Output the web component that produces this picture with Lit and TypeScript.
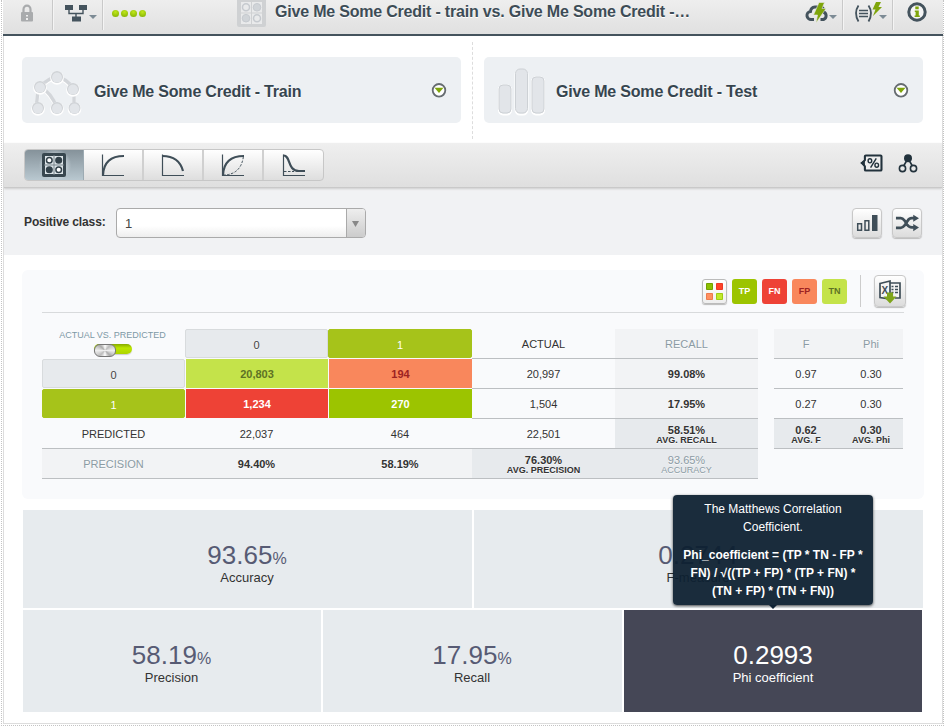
import { LitElement, html, css, svg } from "lit";
import { customElement } from "lit/decorators.js";

const lock = html`<svg width="14" height="18" viewBox="0 0 14 18"><path d="M3.5 9V5.5a3.5 3.8 0 0 1 7 0V9" fill="none" stroke="#a9abad" stroke-width="2.2"/><rect x="1" y="8" width="12" height="9.5" rx="1" fill="#a9abad"/><path d="M7 11v1.5M7 14v2" stroke="#eee" stroke-width="2"/></svg>`;
const flow = html`<svg width="24" height="18" viewBox="0 0 24 18"><path d="M5 4v5.5h14V4M12 9.500v4" fill="none" stroke="#44535d" stroke-width="1.400"/><path d="M1 1h8v5H1zM15 1h8v5h-8zM8 12.500h9v5H8z" fill="#44535d"/></svg>`;
const caret = html`<svg width="8" height="4" viewBox="0 0 8 4"><path d="M0 0h8L4 4z" fill="#7d8b95"/></svg>`;
const matrixPale = html`<svg width="29" height="28" viewBox="0 0 29 28"><rect x="0" y="-3" width="29" height="30" rx="2" fill="#cfd1d3"/><rect x="4" y="2" width="21" height="22" fill="#e9eaeb"/><path d="M14.500 2v22M4 13h21" stroke="#cfd1d3"/><g stroke="#c6cacf"><circle cx="9" cy="7.300" r="3.500" fill="#e9eaeb" stroke-width="1.500"/><circle cx="20" cy="7.300" r="3.800" fill="#d0d4d8"/><circle cx="9" cy="18.200" r="3.800" fill="#d0d4d8"/><circle cx="20" cy="18.200" r="3.500" fill="#e9eaeb" stroke-width="1.500"/></g></svg>`;
const cloud = html`<svg width="24" height="22" viewBox="0 0 24 22"><path d="M9 17.500H6.500a4 4 0 0 1-1-8A5 5 0 0 1 10 5h6q3 1 2.500 5a4 4 0 0 1 0 7.500h-3" fill="none" stroke="#44535d" stroke-width="3"/><path d="M14 .5h5.500l-2.500 6H21L11 21l1.500-8H8.500z" fill="#7fa50b" stroke="#e9e9e9" stroke-width=".6"/></svg>`;
const formula = html`<svg width="30" height="22" viewBox="0 0 30 22"><path d="M4.500 3.500q-5 7.500 0 16M14.500 3.500q5 7.500 0 16" fill="none" stroke="#44535d" stroke-width="1.800"/><path d="M5 8.500h9M5 11.500h9M5 14.500h9" stroke="#44535d" stroke-width="1.600"/><path d="M22 0h5l-2.500 5H28l-9 9 2.500-6.500H18.500z" fill="#7fa50b"/></svg>`;
const info = html`<svg width="20" height="20" viewBox="0 0 20 20"><circle cx="10" cy="10" r="8.200" fill="#f4f4f4" stroke="#44535d" stroke-width="3"/><path d="M8.300 4.500h3.400v2.800H8.300zM7.800 8.500h4v5h1V15H7.600v-1.500h1v-3.500h-.8z" fill="#7fa50b"/></svg>`;
const branches = "M26 7Q17 8 9 17M26 7Q35 8 43 19v19M9 17Q5 26 6 38M9 17Q20 22 26 38";
const tree = html`<svg width="52" height="50" viewBox="0 0 52 50"><path d=${branches} transform="translate(0 1)" fill="none" stroke="#fff" stroke-width="4"/><path d=${branches} fill="none" stroke="#d3d6da" stroke-width="3.500"/>${[[26, 7], [9, 17], [42, 19], [7, 38], [26, 38], [43.5, 38]].map(([x, y]) => svg`<circle cx=${x} cy=${y + 1} r="6.800" fill="#fff"/><circle cx=${x} cy=${y} r="6" fill="#cfd2d6"/><circle cx=${x} cy=${y + 0.6} r="5" fill="#e2e5e9"/>`)}</svg>`;
const bars = html`<svg width="48" height="48" viewBox="0 0 48 48"><g fill="#e3e6ea" stroke="#fff" stroke-width="2"><rect x="1" y="17.500" width="12" height="29" rx="4"/><rect x="17.500" y="2" width="12" height="44.500" rx="4.500"/><rect x="34" y="9.500" width="12" height="37" rx="4"/></g><g fill="#e2e5e9" stroke="#cdd1d5"><rect x="1" y="17" width="12" height="28" rx="4"/><rect x="17.500" y="1" width="12" height="44" rx="4.500"/><rect x="34" y="9" width="12" height="36" rx="4"/></g></svg>`;
const drop = html`<svg width="16" height="16" viewBox="0 0 16 16"><circle cx="8" cy="8.300" r="6.300" fill="#fff" stroke="#666c70" stroke-width="1.800"/><path d="M3.500 5.800h9L8 11z" fill="#7fa50b"/></svg>`;
const grid = html`<svg width="26" height="26" viewBox="0 0 26 26"><rect x="1" y="1" width="24" height="24" rx="2" fill="#38474f"/><path d="M4 4h18v18H4z" fill="#dce4e8"/><path d="M13 3v20M3 13h20" stroke="#7b878d"/><g stroke="#33424a" stroke-width="1.500" fill="#fff"><circle cx="8.300" cy="8.300" r="2.800"/><circle cx="17.700" cy="8.300" r="2.800" fill="#33424a"/><circle cx="8.300" cy="17.700" r="2.800" fill="#33424a"/><circle cx="17.700" cy="17.700" r="2.800"/></g></svg>`;
const curve = (main: string, extra = "") => html`<svg width="24" height="24" viewBox="0 0 24 24"><path d="M1.500 1.500v21H23" fill="none" stroke="#3f4e58" stroke-width="1.200"/><path d=${extra} fill="none" stroke="#3f4e58" stroke-dasharray="2.500 1.500"/><path d=${main} fill="none" stroke="#3f4e58" stroke-width="2.200"/></svg>`;
const percent = html`<svg width="22" height="18" viewBox="1 0 23 19"><path d="M5 2.500q0-1 1-1h15.500q1 0 1 1v14q0 1-1 1H6q-1 0-1-1v-3.500L2 9.500 5 6.500z" fill="#eee" stroke="#22323c" stroke-width="2.200"/><path d="M0 9.500 5 6v7z" fill="#22323c"/><path d="M17 4.500l-6 10" stroke="#22323c" stroke-width="1.500"/><ellipse cx="10.300" cy="7.200" rx="1.900" ry="2.200" fill="none" stroke="#22323c" stroke-width="1.500"/><ellipse cx="17.500" cy="11.800" rx="1.900" ry="2.200" fill="none" stroke="#22323c" stroke-width="1.500"/></svg>`;
const nodes = html`<svg width="20" height="20" viewBox="0 0 20 20"><path d="M10 4.500 5 13M10 4.500 15 13" stroke="#22323c" stroke-width="1.600"/><circle cx="10" cy="4.300" r="4" fill="#22323c"/><g fill="#e8e8e8" stroke="#22323c" stroke-width="1.600"><circle cx="4.500" cy="14.500" r="3.100"/><circle cx="15.500" cy="14.500" r="3.100"/></g></svg>`;
const chart = html`<svg width="22" height="18" viewBox="0 0 22 18"><path d="M1.700 9.700h3.800v6.600H1.700zM9 6.700h3.800v9.600H9z" fill="none" stroke="#3f4e58" stroke-width="1.500"/><path d="M16 1h5.500v16H16z" fill="#3f4e58"/></svg>`;
const shuffle = html`<svg width="24" height="18" viewBox="-1 0 25 18"><path d="M0 4h5q2 0 4 2.500l2.500 4q2 3 5 3h3M0 14h5q2 0 4-2.500L12 7q1.500-3 4.500-3h3" fill="none" stroke="#3f4e58" stroke-width="2.800"/><path d="M18 .3 24 4l-6 3.800zM18 10l6 3.700-6 3.800z" fill="#3f4e58"/></svg>`;
const quad = html`<svg width="18" height="18" viewBox="0 0 18 18"><g stroke-width="1"><path d="M1.500 1.500h6v6h-6z" fill="#8cc100" stroke="#73a000"/><path d="M11.500 1.500h6v6h-6z" fill="#ff4228" stroke="#ea3a25"/><path d="M1.500 11.500h6v6h-6z" fill="#ff8f60" stroke="#ed7a4b"/><path d="M11.500 11.500h6v6h-6z" fill="#c0e92a" stroke="#9fcb13"/></g></svg>`;
const sheet = html`<svg width="22" height="24" viewBox="0 0 22 24"><path d="M1 3.500 11 1v18L1 17.500zM11 3h10v15h-5" fill="#f4f4f4" stroke="#3f4e58" stroke-width="1.700"/><text class="sheet-x" x="2.500" y="14">X</text><path d="M12.500 6.500h2M16 6.500h3M12.500 9.500h2M16 9.500h3M12.500 12.500h2M16 12.500h3" stroke="#3f4e58" stroke-width="1.500"/><path d="M8 12.500h6v4h3.500L11 23.500l-6.500-7H8z" fill="#7fa51b"/></svg>`;

type Cell = [value: string, look: string, note?: string];

const matrix: Cell[] = [
  ["0", "head"], ["1", "head pos"], ["ACTUAL", "line"], ["RECALL", "line soft muted"],
  ["0", "head"], ["20,803", "tn"], ["194", "fp"], ["20,997", "line"], ["99.08%", "line soft bold"],
  ["1", "head pos"], ["1,234", "fn"], ["270", "tp"], ["1,504", "line"], ["17.95%", "line soft bold"],
  ["PREDICTED", "line"], ["22,037", "line"], ["464", "line"], ["22,501", "line"], ["58.51%", "line avg bold", "AVG. RECALL"],
  ["PRECISION", "line soft muted"], ["94.40%", "line soft bold"], ["58.19%", "line soft bold"], ["76.30%", "line avg bold", "AVG. PRECISION"], ["93.65%", "line avg muted", "ACCURACY"],
];
const scores: Cell[] = [
  ["F", "line soft muted"], ["Phi", "line soft muted"],
  ["0.97", "line"], ["0.30", "line"],
  ["0.27", "line"], ["0.30", "line"],
  ["0.62", "line avg bold", "AVG. F"], ["0.30", "line avg bold", "AVG. Phi"],
];
const cell = ([value, look, note]: Cell) =>
  html`<div class="cell ${look} ${note ? "noted" : ""}"><span>${value}</span>${note ? html`<small>${note}</small>` : ""}</div>`;
const tile = (value: string, unit: string, label: string, look = "") =>
  html`<div class="tile ${look}"><div class="value">${value}<span class="unit">${unit}</span></div><div class="label">${label}</div></div>`;

@customElement("app-root")
export class AppRoot extends LitElement {
  static styles = css`
    :host { display: block; width: 944px; height: 726px; box-sizing: border-box; overflow: hidden; background: #fff; font-family: "Liberation Sans", Arial, sans-serif; color: #333; padding-left: 1px; }
    * { box-sizing: border-box; }
    svg { display: block; flex: none; overflow: visible; }
    .outer { height: 100%; border: 1px dotted #c4c4c4; border-top: 0; padding: 0 0 1px 1px; }
    .frame { height: 100%; border: 1px solid #ddd; border-top: 0; display: flex; flex-direction: column; }
    header { height: 36px; margin: 0 -1px; flex: none; display: flex; background: linear-gradient(#eee, #e0e0e0); border-bottom: 2px solid #44535d; }
    .slot { height: 30px; width: 50px; display: flex; border-right: 1px solid #c9c9c9; box-shadow: 1px 0 #f4f4f4; }
    .slot.last { border: 0; box-shadow: none; }
    .lock svg { margin: 4px 0 0 17px; }
    .flow svg:first-child { margin: 4px 0 0 11px; }
    .flow svg + svg { margin: 15px 0 0 1px; }
    .dots { display: flex; gap: 2px; margin: 10px 0 0 9px; width: 125px; }
    .dots i { width: 7px; height: 7px; border-radius: 50%; background: radial-gradient(circle at 50% 30%, #c0e81b, #7caa00); }
    .title { display: flex; flex: 1; font: bold 16px/23px "Liberation Sans", Arial, sans-serif; letter-spacing: -.2px; color: #3d4c56; text-shadow: 0 1px #fff; }
    .title span { margin-left: 9px; white-space: nowrap; }
    .cloud svg:first-child { margin: 2px 0 0 12px; }
    .cloud svg + svg { margin: 15px 0 0 0; }
    .formula svg:first-child { margin: 2px 0 0 11px; }
    .formula svg + svg { margin: 15px 0 0 -5px; }
    .info svg { margin: 2px 0 0 14px; }
    .sources { height: 107px; flex: none; display: flex; padding-left: 18px; }
    .source { width: 439px; flex: none; height: 66px; margin-top: 21px; border-radius: 5px; background: #edf0f3; display: flex; align-items: center; font-weight: bold; font-size: 16px; letter-spacing: -.19px; color: #36454f; text-shadow: 0 1px #fff; }
    .source svg:first-child { margin: 9px 0 0 9px; width: 52px; }
    .source.test svg:first-child { margin: 4px 0 0 14px; width: 48px; }
    .source span { flex: 1; margin: 4px 0 0 11px; }
    .source.test span { margin-left: 10px; }
    .source svg:last-child { margin: 0 14px 0 0; }
    .split { width: 23px; margin: 6px 0 4px; display: flex; justify-content: center; }
    .split::before { content: ""; border-left: 1px dashed #ddd; }
    .toolbar { height: 45px; flex: none; padding: 6px 24px 0 20px; background: linear-gradient(#efefef, #dfdfdf); border-bottom: 1px solid #c9c9c9; box-shadow: 0 1px 2px #ccc; display: flex; position: relative; }
    .tabs { height: 32px; display: flex; border: 1px solid #c7c7c7; border-radius: 4px; overflow: hidden; background: linear-gradient(#fff, #dedede); }
    .tab { width: 60px; border-right: 2px solid #d0d0d0; display: flex; align-items: center; justify-content: center; }
    .tab:first-child { width: 59px; }
    .tab:last-child { border: 0; width: 59px; }
    .tab.on { background: radial-gradient(circle at 52% 50%, #dce7ed 15%, transparent 48%), linear-gradient(#85929a, #b9c8d0); border-right: 1px solid #9dabb3; }
    .tools { margin: 5px 0 0 auto; display: flex; gap: 16px; }
    .tools svg:first-child { margin: 0 -1px 0 0; }
    .filter { height: 67px; flex: none; background: #f1f2f4; display: flex; padding: 20px 20px 0 20px; font-size: 12px; }
    .filter b { line-height: 28px; width: 92px; letter-spacing: -.12px; }
    .select { width: 250px; height: 30px; border: 1px solid #aaa; border-radius: 4px; background: linear-gradient(#fff 60%, #eee); display: flex; color: #444; font-size: 13px; line-height: 29px; padding-left: 8px; overflow: hidden; position: relative; }
    .select::after { content: ""; margin-left: auto; width: 18px; background: linear-gradient(#eee, #ccc); border-left: 1px solid #aaa; }
    .select svg { position: absolute; right: 6px; top: 12px; }
    .btn { width: 30px; height: 30px; border-radius: 4px; border: 1px solid #c8c8c8; background: linear-gradient(#fff, #dcdcdc); box-shadow: 0 1px 1px #bbb; display: flex; align-items: center; justify-content: center; }
    .filter .btn { margin-left: 10px; }
    .filter .btn.first { margin-left: auto; }
    .panel { height: 229px; flex: none; margin: 15px 18px 0 18px; border-radius: 6px; background: #f9fafc; padding: 5px 20px 0 20px; }
    .legend { height: 38px; border-bottom: 1px solid #d8dadc; display: flex; justify-content: flex-end; align-items: flex-start; gap: 5px; }
    .key { width: 25px; height: 25px; margin-top: 4px; border-radius: 3px; font: bold 9px/25px "Liberation Sans", Arial, sans-serif; text-align: center; }
    .key.all { border: 1px solid #bbb; background: linear-gradient(#fff, #eee); box-shadow: 0 1px 1px #bbb; padding: 2px; }
    .legend .rule { width: 1px; height: 32px; background: #ccc; margin: 0 8px; }
    .legend .btn { width: 32px; height: 32px; margin-right: -2px; padding-top: 1px; }
    .sheet-x { font: bold 10px "Liberation Sans", Arial, sans-serif; fill: #3f4e58; }
    .tables { display: flex; margin-top: 16px; gap: 16px; }
    .matrix { display: grid; width: 716px; flex: none; grid-template-columns: 143px 143px 144px 143px 143px; grid-auto-rows: 30px; }
    .scores { display: grid; width: 129px; flex: none; grid-template-columns: 64px 65px; grid-auto-rows: 30px; align-content: start; }
    .scores .cell:nth-child(even) { padding-left: 1px; }
    .cell { display: flex; flex-direction: column; align-items: center; justify-content: center; font-size: 11px; line-height: 12px; border-bottom: 1px solid transparent; text-shadow: 0 1px rgba(255,255,255,.7); }
    .cell.noted { line-height: 11px; padding-top: 2px; }
    .cell small { font-size: 9px; line-height: 8px; }
    .line { border-color: #bcbfc2; }
    .soft { background: #f2f3f5; }
    .avg { background: #e7eaed; }
    .muted { color: #8b9ba4; }
    .bold { font-weight: bold; }
    .head { height: 29px; border: 1px solid #d8dbdd; border-radius: 2px; background: #e7eaed; padding-top: 3px; color: #444; }
    .head.pos { background: #a6c31a; border-color: #a6c31a; color: #fff; text-shadow: none; }
    .cell.tn, .cell.fp, .cell.fn, .cell.tp { height: 29px; margin-left: 1px; font-weight: bold; padding-top: 1px; border: 0; text-shadow: none; }
    .tn { background: #c4e34a; color: #5e7225; }
    .fp { background: #f9875c; color: #9e2222; }
    .fn { background: #ee4236; color: #fff; }
    .tp { background: #9cc400; color: #fff; }
    .switch { display: flex; flex-direction: column; align-items: center; font-size: 9px; line-height: 10px; color: #7e99a6; padding: 1px 2px 0 0; white-space: nowrap; }
    .switch i { width: 38px; height: 10px; border-radius: 5px; background: linear-gradient(#86a900, #bce600 40%, #add400); margin-top: 4px; box-shadow: 0 1px 1px #ccc; display: flex; }
    .switch i::before { content: ""; width: 20px; height: 11px; border-radius: 6px; border: 1px solid #777; background: conic-gradient(#fff, #bbb, #eee, #aaa, #fff, #bbb, #eee, #aaa, #fff); }
    .tiles { margin: 11px 18px 0 19px; display: flex; flex-direction: column; gap: 2px; position: relative; }
    .row { display: flex; gap: 2px; }
    .tile { height: 98px; flex: none; background: #e7ebee; text-align: center; padding: 30px 1px 0 0; width: 449px; }
    .thirds .tile { height: 102px; width: 299px; }
    .thirds .tile:first-child, .thirds .tile:last-child { width: 298px; }
    .value { font-size: 26px; line-height: 30px; color: #575b74; }
    .unit { font-size: 16px; }
    .label { font-size: 13px; line-height: 15px; margin-top: -4px; }
    .tile.on { background: #454756; color: #fff; padding-right: 0; }
    .on .value { color: #fff; }
    .tip { position: absolute; left: 650px; top: -15px; width: 200px; height: 110px; border-radius: 4px; background: rgba(13,32,49,.94); color: #fff; text-align: center; font-size: 12px; line-height: 18px; padding: 5px 8px; box-shadow: 0 1px 3px rgba(0,0,0,.7); }
    .tip p { margin: 0 0 10px; }
    .tip::after { content: ""; position: absolute; left: 96px; top: 110px; border: 4px solid transparent; border-top-color: #102335; border-bottom: 0; }
  `;

  render() {
    return html`<div class="outer"><div class="frame">
      <header>
        <div class="slot lock">${lock}</div>
        <div class="slot flow">${flow}${caret}</div>
        <div class="dots"><i></i><i></i><i></i><i></i></div>
        <div class="title">${matrixPale}<span>Give Me Some Credit - train vs. Give Me Some Credit -…</span></div>
        <div class="slot cloud">${cloud}${caret}</div>
        <div class="slot formula">${formula}${caret}</div>
        <div class="slot last info">${info}</div>
      </header>
      <section class="sources">
        <div class="source">${tree}<span>Give Me Some Credit - Train</span>${drop}</div>
        <div class="split"></div>
        <div class="source test">${bars}<span>Give Me Some Credit - Test</span>${drop}</div>
      </section>
      <nav class="toolbar">
        <div class="tabs">
          <div class="tab on">${grid}</div>
          <div class="tab">${curve("M2 22Q3 3 23 3")}</div>
          <div class="tab">${curve("M1.500 3Q18 3 22 18")}</div>
          <div class="tab">${curve("M2 22Q3 3 23 3", "M2 22Q20 22 22.500 3")}</div>
          <div class="tab">${curve("M1.500 2.500C9 2.500 5 18 17 18h6", "M2 18.500h10")}</div>
        </div>
        <div class="tools">${percent}${nodes}</div>
      </nav>
      <section class="filter">
        <b>Positive class:</b>
        <div class="select">1<svg width="7" height="6"><path d="M0 0h7L3.500 6z" fill="#888"/></svg></div>
        <div class="btn first">${chart}</div>
        <div class="btn">${shuffle}</div>
      </section>
      <section class="panel">
        <div class="legend">
          <div class="key all">${quad}</div>
          <div class="key tp">TP</div><div class="key fn">FN</div><div class="key fp">FP</div><div class="key tn">TN</div>
          <div class="rule"></div>
          <div class="btn">${sheet}</div>
        </div>
        <div class="tables">
          <div class="matrix"><div class="switch">ACTUAL VS. PREDICTED<i></i></div>${matrix.map(cell)}</div>
          <div class="scores">${scores.map(cell)}</div>
        </div>
      </section>
      <section class="tiles">
        <div class="row">${tile("93.65", "%", "Accuracy")}${tile("0.2744", "", "F-measure")}</div>
        <div class="row thirds">${tile("58.19", "%", "Precision")}${tile("17.95", "%", "Recall")}${tile("0.2993", "", "Phi coefficient", "on")}</div>
        <div class="tip"><p>The Matthews Correlation Coefficient.</p><b>Phi_coefficient = (TP * TN - FP * FN) / √((TP + FP) * (TP + FN) * (TN + FP) * (TN + FN))</b></div>
      </section>
    </div></div>`;
  }
}
